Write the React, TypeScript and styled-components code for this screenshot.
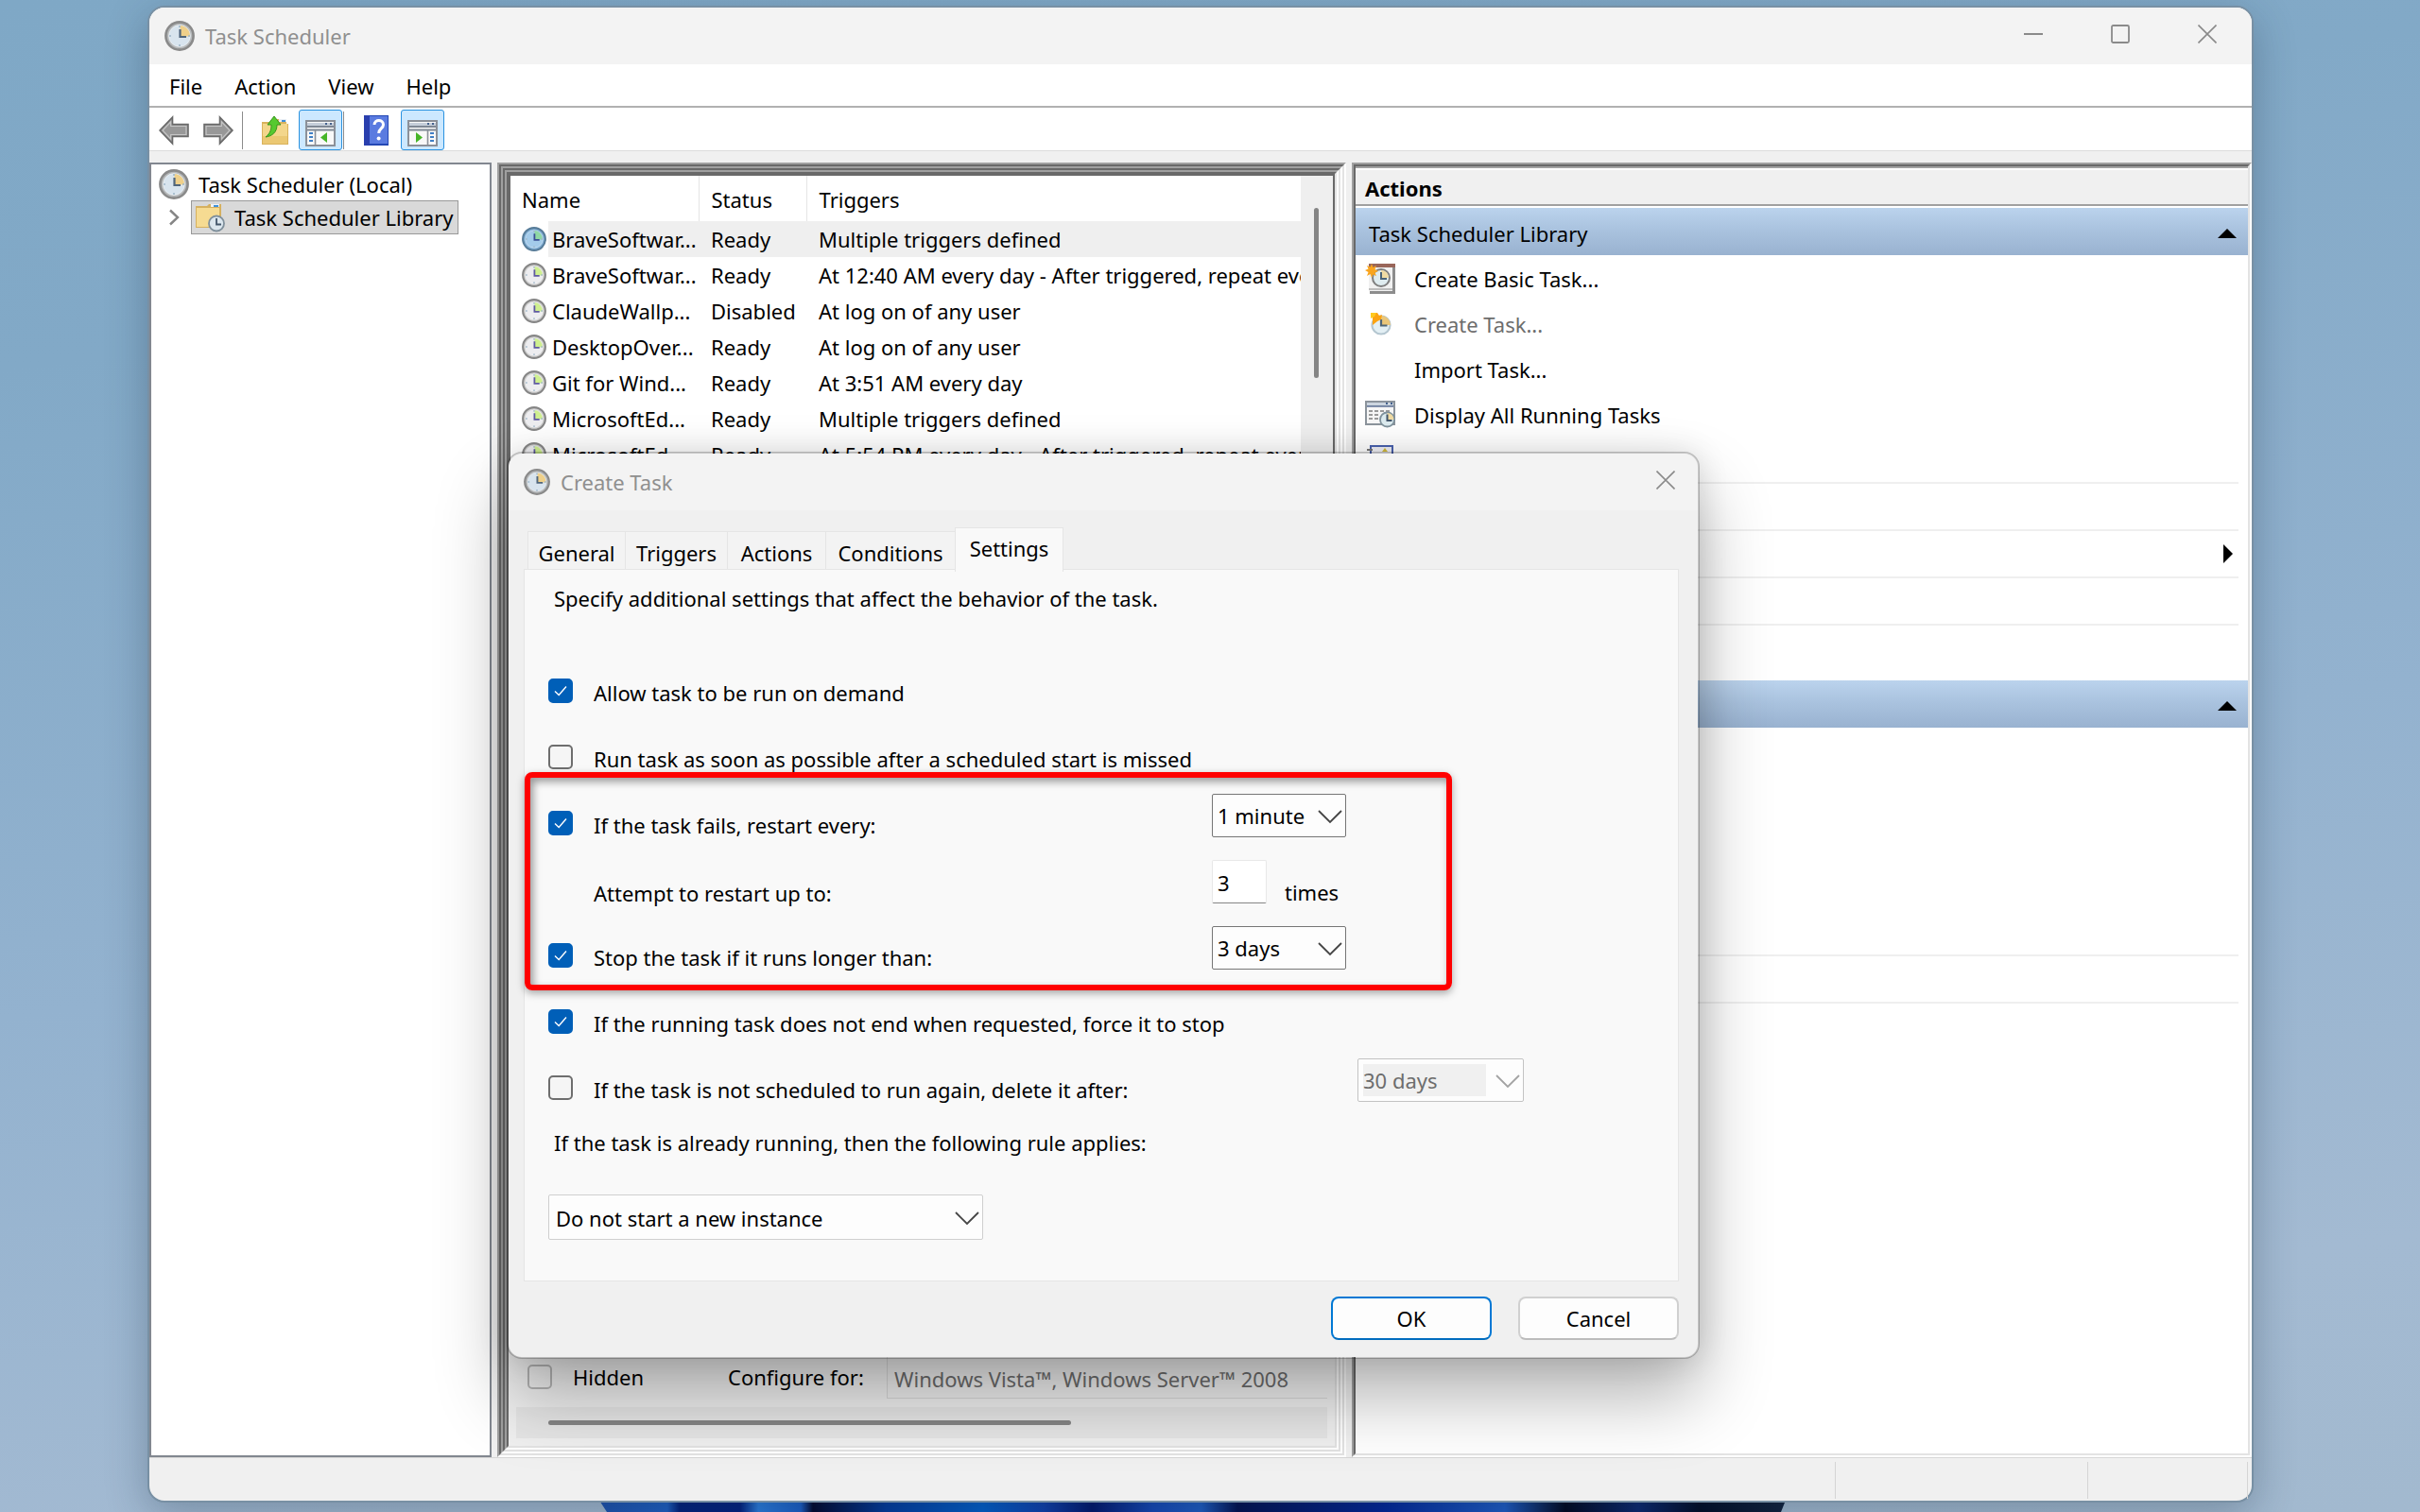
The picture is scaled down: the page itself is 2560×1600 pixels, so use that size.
import React from "react";
import styled, { createGlobalStyle, css } from "styled-components";

const GlobalStyle = createGlobalStyle`
  *, *::before, *::after { box-sizing: border-box; }
  html, body { margin: 0; height: 100%; }
  body, button, input, select, table {
    font-family: "Noto Sans", "Open Sans", sans-serif;
    font-size: 22px;
    line-height: 32px;
    color: #000;
  }
  body { overflow: hidden; }
  button { background: none; border: 0; padding: 0; text-align: left; }
  svg { display: block; flex: none; }
`;

/* ---------- Desktop and window frame ---------- */

const Desktop = styled.div`
  position: relative;
  display: flex;
  height: 100vh;
  padding: 6px 176px 10px 156px;
  background: linear-gradient(172deg, #7fa8c6 0%, #82a9c7 20%, #93b2cf 55%, #a3bad2 85%, #a2b9cf 100%);
`;

const Wallpaper = styled.svg`
  position: absolute;
  left: 0;
  bottom: 0;
  width: 100%;
  height: 40px;
`;

const Window = styled.main`
  position: relative;
  display: flex;
  flex-direction: column;
  flex: 1;
  min-width: 0;
  border: 2px solid #7890a4;
  border-radius: 18px;
  background: #f0f0f0;
  box-shadow: 0 12px 44px rgba(20, 40, 60, 0.3);
`;

const TitleBar = styled.header`
  display: flex;
  align-items: center;
  gap: 11px;
  height: 60px;
  flex: none;
  padding: 0 17px 0 16px;
  background: #f3f3f3;
  color: #8f8f8f;
  border-radius: 16px 16px 0 0;
`;

const TitleText = styled.h1`
  flex: 1;
  margin: 0;
  font-size: 22px;
  font-weight: 400;
`;

const Caption = styled.button<{ $narrow?: boolean }>`
  display: grid;
  place-items: center;
  width: ${(p) => (p.$narrow ? 34 : 60)}px;
  height: 48px;
  padding-bottom: 4px;
`;

const CaptionGroup = styled.div`
  display: flex;
  gap: 32px;
`;

const MenuBar = styled.nav`
  display: flex;
  align-items: center;
  gap: 34px;
  height: 46px;
  flex: none;
  padding: 1px 21px 0;
  background: #fff;
  border-bottom: 2px solid #b1b1b1;
`;

const ToolBar = styled.div`
  display: flex;
  align-items: center;
  height: 46px;
  flex: none;
  padding: 2px 10px 0;
  background: #fff;
  border-bottom: 1px solid #dcdcdc;
`;

const Tool = styled.button<{ $on?: boolean; $inset?: boolean; $w: number }>`
  display: grid;
  place-items: center;
  width: ${(p) => p.$w}px;
  height: 43px;
  padding-left: ${(p) => (p.$inset ? 7 : 0)}px;
  border-radius: 3px;
  ${(p) =>
    p.$on &&
    css`
      padding-top: 6px;
      background: #cce8ff;
      border: 1px solid #2a92e0;
    `}
`;

const ToolRule = styled.span`
  width: 1px;
  height: 40px;
  margin: 0 1px;
  background: #8c8c8c;
`;

const Body = styled.div`
  display: grid;
  grid-template-columns: 362px 898fr 952fr;
  gap: 6px;
  flex: 1;
  min-height: 0;
  padding: 12px 0 0;
`;

/* Sunken edge: one grey/dark line pair on the top and left, light pair on the bottom and right. */
const Sunken = styled.div`
  display: flex;
  flex-direction: column;
  flex: 1;
  min-width: 0;
  min-height: 0;
  border: 2px solid;
  border-color: #a0a0a0 #fff #fff #a0a0a0;
`;

const SunkenInner = styled(Sunken)`
  border-color: #696969 #e3e3e3 #e3e3e3 #696969;
`;

/* ---------- Tree ---------- */

const Tree = styled.aside`
  border: 2px solid #828790;
  background: #fff;
  padding: 3px 8px;
`;

const TreeRow = styled.div<{ $level?: number }>`
  display: flex;
  align-items: center;
  gap: ${(p) => (p.$level ? 12 : 10)}px;
  height: ${(p) => (p.$level ? 36 : 35)}px;
  padding-left: ${(p) => (p.$level ? 10 : 0)}px;
`;

const TreeItem = styled.button`
  display: flex;
  align-items: center;
  gap: 10px;
  height: 36px;
  padding: 0 4px 0 3px;
  white-space: nowrap;
  background: #d9d9d9;
  border: 1px solid #999;
`;

/* ---------- Task list ---------- */

const ListPane = styled.section`
  display: flex;
  height: 488px;
  flex: none;
  overflow: hidden;
  border: 2px solid #696969;
  background: #fff;
`;

const TableWrap = styled.div`
  flex: 1;
  min-width: 0;
  overflow: hidden;
`;

const TaskTable = styled.table`
  width: 100%;
  table-layout: fixed;
  border-collapse: collapse;
  white-space: nowrap;
  th {
    height: 48px;
    padding: 2px 12px 0 13px;
    font-weight: 400;
    text-align: left;
    line-height: 32px;
    border-right: 1px solid #e5e5e5;
  }
  th:first-child { padding-left: 12px; }
  th:last-child { border-right: 0; }
  td {
    height: 38px;
    padding: 0 0 0 13px;
    overflow: hidden;
  }
  td:first-child { padding-left: 12px; }
`;

const TaskRow = styled.tr<{ $selected: boolean }>`
  ${(p) =>
    p.$selected &&
    css`
      td { background: #efefef; }
      td:first-child { background: linear-gradient(to right, #fff 40px, #efefef 40px); }
    `}
`;

const NameCell = styled.div`
  display: flex;
  align-items: center;
  gap: 6px;
`;

const VScroll = styled.div`
  width: 34px;
  flex: none;
  padding: 34px 14px 0;
  background: #efefef;
`;

const VThumb = styled.div`
  width: 5px;
  height: 180px;
  border-radius: 3px;
  background: #858585;
`;

const DetailPane = styled.section`
  display: flex;
  flex: 1;
  flex-direction: column;
  justify-content: flex-end;
  min-height: 0;
  padding: 0 8px 8px;
  margin-top: 10px;
  background: #f0f0f0;
`;

const DetailRow = styled.div`
  display: flex;
  align-items: center;
  padding-left: 12px;
`;

const DetailLabel = styled.label<{ $w: number }>`
  width: ${(p) => p.$w}px;
  flex: none;
`;

const DetailSelect = styled.select`
  appearance: none;
  flex: 1;
  min-width: 0;
  height: 46px;
  padding: 4px 7px 0;
  color: #6d6d6d;
  opacity: 1;
  background: #f0f0f0;
  border: 1px solid #d8d8d8;
  border-right: 0;
`;

const HScroll = styled.div`
  height: 33px;
  margin-top: 9px;
  padding: 14px 34px;
  background: #e6e6e6;
`;

const HThumb = styled.div`
  width: 70%;
  height: 5px;
  border-radius: 3px;
  background: #858585;
`;

/* ---------- Actions pane ---------- */

const ActionsPane = styled.section`
  display: flex;
  flex-direction: column;
  min-width: 0;
  min-height: 0;
`;

const ActionsTitle = styled.h2`
  height: 42px;
  flex: none;
  margin: 0;
  padding: 5px 10px 0;
  font-size: 22px;
  font-weight: 700;
  line-height: 32px;
  background: #f0f0f0;
  border-top: 2px solid #a0a0a0;
  border-bottom: 2px solid #a0a0a0;
  box-shadow: inset 0 2px #fff;
`;

const ActionsScroll = styled.div`
  flex: 1;
  min-height: 0;
  overflow: hidden;
  padding-top: 2px;
  background: #fff;
`;

const GroupHead = styled.button`
  display: flex;
  align-items: center;
  justify-content: space-between;
  width: 100%;
  height: 50px;
  padding: 3px 12px 0 14px;
  background: linear-gradient(#bbd3ed, #aac3df 45%, #99b2d0);
`;

const ActionGroup = styled.div`
  padding: 0 10px 10px;
`;

const ActionItem = styled.button<{ $rule?: boolean }>`
  display: grid;
  grid-template-columns: 52px 1fr auto;
  align-items: center;
  width: 100%;
  height: ${(p) => (p.$rule ? 50 : 48)}px;
  padding: ${(p) => (p.$rule ? "0 6px 0 0" : "2px 6px 0 0")};
  border-top: ${(p) => (p.$rule ? "2px solid #efefef" : "0")};
  &:disabled { color: #6d6d6d; }
`;

const StatusBar = styled.footer`
  display: grid;
  grid-template-columns: 1fr 267px 169px;
  height: 46px;
  flex: none;
  padding: 4px 4px 2px 0;
  border-top: 1px solid #d7d7d7;
  border-radius: 0 0 16px 16px;
`;

const StatusCell = styled.div`
  border-right: 1px solid #d5d5d5;
`;

/* ---------- Dialog ---------- */

const Dialog = styled.section`
  position: absolute;
  left: 378px;
  top: 470px;
  width: 1262px;
  border: 2px solid rgba(0, 0, 0, 0.22);
  border-radius: 16px;
  background: #f0f0f0;
  background-clip: padding-box;
  box-shadow: 0 40px 76px rgba(0, 0, 0, 0.3), 0 0 32px rgba(0, 0, 0, 0.12);
`;

const DialogBody = styled.form`
  padding: 18px 20px 18px 16px;
`;

const TabStrip = styled.div`
  position: relative;
  display: flex;
  align-items: flex-end;
  height: 44px;
  padding-left: 4px;
`;

const Tab = styled.button<{ $active?: boolean; $w: number }>`
  width: ${(p) => p.$w}px;
  height: 40px;
  padding-top: 4px;
  text-align: center;
  background: #f3f3f3;
  border: 1px solid #e5e5e5;
  border-width: 1px 0 0 1px;
  ${(p) =>
    p.$active &&
    css`
      height: 47px;
      margin-bottom: -3px;
      padding: 0 0 4px;
      border-right-width: 1px;
      background: #f9f9f9;
      z-index: 1;
    `}
`;

const Panel = styled.div`
  padding: 14px 25px 43px;
  background: #f9f9f9;
  border: 1px solid #e5e5e5;
`;

const Note = styled.p`
  margin: 0;
  padding-left: 6px;
`;

const Options = styled.div`
  margin: 47px 0 7px;
`;

const OptionRow = styled.div<{ $wide?: boolean }>`
  display: grid;
  grid-template-columns: 48px ${(p) => (p.$wide ? 808 : 654)}px auto;
  align-items: center;
  height: 70px;
`;

const OptionLabel = styled.label<{ $low?: boolean }>`
  grid-column: 2;
  padding-top: ${(p) => (p.$low ? 8 : 4)}px;
  white-space: nowrap;
`;

const OptionControl = styled.div`
  display: flex;
  align-items: flex-end;
  gap: 19px;
  padding-bottom: 16px;
`;

const Unit = styled.span`
  line-height: 32px;
  margin-bottom: -4px;
`;

const Group = styled.div`
  position: relative;
`;

/* Red callout drawn over the restart settings. */
const Callout = styled.div`
  position: absolute;
  left: -25px;
  top: -19px;
  bottom: -2px;
  width: 981px;
  border: 6px solid #f00;
  border-radius: 8px;
  pointer-events: none;
  box-shadow: 0 3px 8px rgba(0, 0, 0, 0.35), inset 3px 4px 8px rgba(0, 0, 0, 0.4);
`;

const RuleLine = styled.div`
  margin-top: 39px;
`;

const CheckWrap = styled.span`
  position: relative;
  display: block;
  width: 26px;
  height: 26px;
  flex: none;
  svg { position: absolute; left: 6px; top: 7px; pointer-events: none; }
`;

const CheckInput = styled.input`
  appearance: none;
  display: block;
  width: 26px;
  height: 26px;
  margin: 0;
  border: 2px solid #6e6e6e;
  border-radius: 5px;
  background: #f5f5f5;
  &:checked { background: #005fb8; border-color: #005fb8; }
  &:disabled { border-color: #b5b5b5; background: transparent; }
`;

const HiddenCheck = styled.span`
  width: 48px;
  flex: none;
`;

const SelectWrap = styled.span<{ $w: number }>`
  position: relative;
  display: block;
  width: ${(p) => p.$w}px;
  svg { position: absolute; right: 4px; top: 50%; margin-top: -6px; pointer-events: none; }
`;

const SelectBox = styled.select<{ $tall?: boolean }>`
  appearance: none;
  display: block;
  width: 100%;
  height: ${(p) => (p.$tall ? 48 : 46)}px;
  padding: ${(p) => (p.$tall ? "2px 7px 0" : "0 5px")};
  border: 1px solid ${(p) => (p.$tall ? "#cfcfcf" : "#767676")};
  border-radius: 2px;
  background: #fdfdfd;
  &:disabled {
    color: #6d6d6d;
    opacity: 1;
    border-color: #c3c3c3;
    background: linear-gradient(#f0f0f0, #f0f0f0) 5px 5px / 130px 34px no-repeat #fdfdfd;
  }
`;

const NumberBox = styled.input`
  width: 58px;
  height: 46px;
  padding: 2px 5px 0;
  border: 1px solid #e8e8e8;
  border-bottom-color: #868686;
  border-radius: 2px;
  background: #fff;
`;

const Buttons = styled.div`
  display: flex;
  justify-content: flex-end;
  gap: 28px;
  margin-top: 16px;
`;

const PushButton = styled.button<{ $primary?: boolean }>`
  width: 170px;
  height: 46px;
  text-align: center;
  background: #fdfdfd;
  border: 2px solid ${(p) => (p.$primary ? "#0078d4" : "#d0d0d0")};
  border-bottom-color: ${(p) => (p.$primary ? "#006cbe" : "#bcbcbc")};
  border-radius: 8px;
`;

/* ---------- Drawings ---------- */

const Clock = ({ size = 32, tone = "plain" }: { size?: number; tone?: "plain" | "list" | "selected" }) => {
  const palette = {
    plain: { ring: "#8a8a8a", rim: "#b6b9bb", face: "#d8e4ee", slice: "#efd08a", hand: "#50667c" },
    list: { ring: "#868686", rim: "#cfcfcf", face: "#ededf0", slice: "#cff08f", hand: "#5f5aa0" },
    selected: { ring: "#577c99", rim: "#82b0d6", face: "#a3cbea", slice: "#8fd8a4", hand: "#3a4f94" },
  }[tone];
  return (
    <svg width={size} height={size} viewBox="0 0 32 32" aria-hidden="true">
      <circle cx="16" cy="16" r="14.6" fill={palette.rim} stroke={palette.ring} strokeWidth="2.6" />
      <circle cx="16" cy="16" r="11.4" fill={palette.face} stroke="#fff" strokeOpacity="0.5" />
      <path d="M16.500 16.500V5A11 11 0 0 1 27 16.500Z" fill={palette.slice} />
      <path d="M16 5v2M16 25v2M5 16h2M25 16h2" stroke="#9fb7c9" strokeWidth="1.6" />
      <path d="M16.500 9v8H23" fill="none" stroke={palette.hand} strokeWidth="2.2" />
    </svg>
  );
};

const BackArrow = ({ flip }: { flip?: boolean }) => (
  <svg width="32" height="32" viewBox="0 0 32 32" aria-hidden="true">
    <g transform={flip ? "matrix(-1 0 0 1 32 0)" : undefined}>
      <path d="M1 16 14.5 2v7.5H31v13H14.5V30Z" fill="#8d8d8d" stroke="#6a6a6a" strokeWidth="1.6" />
      <path d="M4 16 12.7 6.800v4.700H29v9H12.700v4.700Z" fill="#989898" stroke="#c6c6c6" strokeWidth="1.2" />
    </g>
  </svg>
);

const FolderUp = () => (
  <svg width="30" height="32" viewBox="0 0 30 32" aria-hidden="true">
    <path d="M1 7h9l2-3h15v5h2v22H1Z" fill="#d9b25c" />
    <path d="M19 4h8v3h-8Z" fill="#e9eef5" />
    <path d="M22 5h4v2h-4Z" fill="#3f8fd8" />
    <path d="M2 9h26v21H2Z" fill="#f3d68b" />
    <path d="M2 22h26v8H2Z" fill="#ebc873" />
    <path d="M5 23c5-4 6-8 6-13H7L14 1l7 9h-4c0 8-5 12-12 13Z" fill="#56c92f" stroke="#38951c" />
  </svg>
);

const PaneIcon = ({ side }: { side: "left" | "right" }) => (
  <svg width="32" height="28" viewBox="0 0 32 28" aria-hidden="true">
    <rect x="1" y="1" width="30" height="26" fill="#f8f8f8" stroke="#8b9098" strokeWidth="2" />
    <path d="M2 3h28v3H2Z" fill="#c5ced9" />
    <path d="M2 6h28v2H2ZM2 9.500h28v2H2Z" fill="#7e8894" />
    <path d="M21 3h2v2h-2ZM26 3h2v2h-2Z" fill="#44618d" />
    <g transform={side === "right" ? "matrix(-1 0 0 1 32 0)" : undefined}>
      <path d="M10.500 11v15" stroke="#8b9098" strokeWidth="1.6" />
      <path d="M4 14h4M4 18h4M4 22h4" stroke="#3f7fc5" strokeWidth="2" />
      <path d="M23 13v11l-7-5.500Z" fill="#46b528" />
    </g>
  </svg>
);

const HelpBook = () => (
  <svg width="26" height="32" viewBox="0 0 26 32" aria-hidden="true">
    <rect width="26" height="32" fill="#2347b4" />
    <rect x="6" y="1" width="19" height="29" fill="#5a7be0" />
    <path d="M0 0h6v32H0Z" fill="#2a3fae" />
    <path d="M11 10c0-6 9.500-6 9.500 0 0 4-4.800 4-4.800 9" fill="none" stroke="#fff" strokeWidth="3" />
    <circle cx="15.600" cy="24.500" r="2" fill="#fff" />
  </svg>
);

const FolderClock = () => (
  <svg width="32" height="32" viewBox="0 0 32 32" aria-hidden="true">
    <path d="M1 4h12l2-2h13v25H1Z" fill="#d6b160" />
    <path d="M17 2h9v3h-9Z" fill="#eef2f7" />
    <path d="M20 3h5v2h-5Z" fill="#3e91dc" />
    <path d="M2 6h24v20H2Z" fill="#f6db92" />
    <circle cx="23" cy="22.500" r="8" fill="#dbe6ee" stroke="#7f8f9b" strokeWidth="1.800" />
    <path d="M23 17v6.500h5" fill="none" stroke="#43566a" strokeWidth="1.800" />
  </svg>
);

const NewTaskIcon = () => (
  <svg width="32" height="32" viewBox="0 0 32 32" aria-hidden="true">
    <path d="M5 0h27v32H5Z" fill="#8d8d8d" />
    <path d="M4 4h25v25H4Z" fill="#f1f1f1" />
    <path d="M4 0h28v4H4Z" fill="#99665a" />
    <path d="M4 26h25v2H4Z" fill="#bdbdbd" />
    <circle cx="17" cy="15" r="9" fill="#dfecf0" stroke="#7f7f7f" strokeWidth="2" />
    <path d="M17 15V7a8 8 0 0 1 8 8Z" fill="#f0dba3" />
    <path d="M17 9v7h6" fill="none" stroke="#4b6478" strokeWidth="2" />
    <path d="m7 0 1.500 4L12 2l-1.500 4L14 8l-3.500 1.500L12 13l-3.800-1.500L7 15l-1.500-4L2 13l1.500-4L0 7l3.500-1.500L2 2l3.700 1.500Z" fill="#f9a51f" />
  </svg>
);

const CreateTaskIcon = () => (
  <svg width="32" height="32" viewBox="0 0 32 32" aria-hidden="true">
    <circle cx="17" cy="17" r="9.600" fill="#e3eff4" stroke="#b4c6d0" strokeWidth="2" />
    <path d="M17 17V7a10 10 0 0 1 10 10Z" fill="#eac679" />
    <path d="M17 11v6.500h6.500" fill="none" stroke="#4f6678" strokeWidth="2.200" />
    <path d="M6 4h7l2 3 3-1-1 5-4 2-5 4V9Z" fill="#fca311" />
    <path d="M6 4h6l-2 4-4 2Z" fill="#ffc91f" />
  </svg>
);

const RunningIcon = () => (
  <svg width="32" height="32" viewBox="0 0 32 32" aria-hidden="true">
    <rect x="1" y="2" width="30" height="24" fill="#f6f6f6" stroke="#8c949c" strokeWidth="2" />
    <path d="M2 3h28v3H2Z" fill="#ccd5df" />
    <path d="M2 6h28v1.800H2Z" fill="#6e7f9f" />
    <path d="M22 3h2v2h-2ZM27 3h2v2h-2Z" fill="#44618d" />
    <path d="M4 12h4m2 0h4m2 0h4m2 0h4M4 16h4m2 0h4M4 20h4m2 0h4" stroke="#9a9a9a" strokeWidth="1.800" />
    <circle cx="23.500" cy="21" r="7.500" fill="#dcebef" stroke="#7f929c" strokeWidth="1.800" />
    <path d="M23.500 21v-7a7 7 0 0 1 7 7Z" fill="#f0dba3" />
    <path d="M23.500 15.500V22h5" fill="none" stroke="#43566a" strokeWidth="2" />
  </svg>
);

const HistoryIcon = () => (
  <svg width="32" height="32" viewBox="0 0 32 32" aria-hidden="true">
    <rect x="6" y="1" width="23" height="30" fill="#f0f0f6" stroke="#4a61ae" strokeWidth="2" />
    <path d="M2 5h6M2 11h6M2 17h6" stroke="#777" strokeWidth="2" />
    <path d="m21 3 3 4h-6Z" fill="#d0b83a" />
  </svg>
);

const UpTriangle = () => (
  <svg width="20" height="10" viewBox="0 0 20 10" aria-hidden="true">
    <path d="M10 0 20 10H0Z" />
  </svg>
);

const RightTriangle = () => (
  <svg width="10" height="20" viewBox="0 0 10 20" aria-hidden="true">
    <path d="M0 0 10 10 0 20Z" />
  </svg>
);

const CloseMark = () => (
  <svg width="20" height="20" viewBox="0 0 20 20" aria-hidden="true">
    <path d="m.500.500 19 19m0-19-19 19" stroke="#8a8a8a" strokeWidth="1.600" />
  </svg>
);

const Chevron = ({ faded }: { faded?: boolean }) => (
  <svg width="26" height="15" viewBox="0 0 26 15" aria-hidden="true">
    <path d="m1 1 12 12L25 1" fill="none" stroke={faded ? "#a3a3a3" : "#454545"} strokeWidth="1.800" />
  </svg>
);

/* ---------- Small parts ---------- */

const Check = ({ id, on, disabled }: { id: string; on?: boolean; disabled?: boolean }) => (
  <CheckWrap>
    <CheckInput type="checkbox" id={id} defaultChecked={on} disabled={disabled} />
    {on && (
      <svg width="14" height="12" viewBox="0 0 14 12" aria-hidden="true">
        <path d="m1 6.500 4.200 4L13 1.500" fill="none" stroke="#fff" strokeWidth="1.400" />
      </svg>
    )}
  </CheckWrap>
);

const DropDown = (p: { label: string; value: string; width: number; tall?: boolean; disabled?: boolean }) => (
  <SelectWrap $w={p.width}>
    <SelectBox aria-label={p.label} $tall={p.tall} disabled={p.disabled} defaultValue={p.value}>
      <option>{p.value}</option>
    </SelectBox>
    <Chevron faded={p.disabled} />
  </SelectWrap>
);

const tasks = [
  ["BraveSoftwar...", "Ready", "Multiple triggers defined"],
  ["BraveSoftwar...", "Ready", "At 12:40 AM every day - After triggered, repeat every"],
  ["ClaudeWallp...", "Disabled", "At log on of any user"],
  ["DesktopOver...", "Ready", "At log on of any user"],
  ["Git for Wind...", "Ready", "At 3:51 AM every day"],
  ["MicrosoftEd...", "Ready", "Multiple triggers defined"],
  ["MicrosoftEd...", "Ready", "At 5:54 PM every day - After triggered, repeat every"],
];

const actions = [
  { label: "Create Basic Task...", icon: <NewTaskIcon /> },
  { label: "Create Task...", icon: <CreateTaskIcon />, disabled: true },
  { label: "Import Task..." },
  { label: "Display All Running Tasks", icon: <RunningIcon /> },
  { label: "Enable All Tasks History", icon: <HistoryIcon /> },
];

const CreateTaskDialog = () => (
  <Dialog role="dialog" aria-labelledby="dialog-title">
    <TitleBar as="div">
      <Clock size={28} />
      <TitleText as="h2" id="dialog-title">Create Task</TitleText>
      <Caption $narrow aria-label="Close dialog"><CloseMark /></Caption>
    </TitleBar>
    <DialogBody onSubmit={(e) => e.preventDefault()}>
      <TabStrip role="tablist">
        <Tab type="button" role="tab" $w={103}>General</Tab>
        <Tab type="button" role="tab" $w={108}>Triggers</Tab>
        <Tab type="button" role="tab" $w={104}>Actions</Tab>
        <Tab type="button" role="tab" $w={137}>Conditions</Tab>
        <Tab type="button" role="tab" $w={115} $active aria-selected="true">Settings</Tab>
      </TabStrip>
      <Panel role="tabpanel">
        <Note>Specify additional settings that affect the behavior of the task.</Note>
        <Options>
          <OptionRow>
            <Check id="demand" on />
            <OptionLabel htmlFor="demand">Allow task to be run on demand</OptionLabel>
          </OptionRow>
          <OptionRow>
            <Check id="missed" />
            <OptionLabel htmlFor="missed">Run task as soon as possible after a scheduled start is missed</OptionLabel>
          </OptionRow>
          <Group>
            <OptionRow>
              <Check id="restart" on />
              <OptionLabel htmlFor="restart">If the task fails, restart every:</OptionLabel>
              <OptionControl>
                <DropDown label="Restart interval" value="1 minute" width={142} />
              </OptionControl>
            </OptionRow>
            <OptionRow>
              <OptionLabel htmlFor="attempts" $low>Attempt to restart up to:</OptionLabel>
              <OptionControl>
                <NumberBox id="attempts" defaultValue="3" />
                <Unit>times</Unit>
              </OptionControl>
            </OptionRow>
            <OptionRow>
              <Check id="stop" on />
              <OptionLabel htmlFor="stop">Stop the task if it runs longer than:</OptionLabel>
              <OptionControl>
                <DropDown label="Longest run" value="3 days" width={142} />
              </OptionControl>
            </OptionRow>
            <Callout />
          </Group>
          <OptionRow>
            <Check id="force" on />
            <OptionLabel htmlFor="force">If the running task does not end when requested, force it to stop</OptionLabel>
          </OptionRow>
          <OptionRow $wide>
            <Check id="delete" />
            <OptionLabel htmlFor="delete">If the task is not scheduled to run again, delete it after:</OptionLabel>
            <OptionControl>
              <DropDown label="Delete after" value="30 days" width={176} disabled />
            </OptionControl>
          </OptionRow>
        </Options>
        <Note>If the task is already running, then the following rule applies:</Note>
        <RuleLine>
          <DropDown label="Running instance rule" value="Do not start a new instance" width={460} tall />
        </RuleLine>
      </Panel>
      <Buttons>
        <PushButton type="submit" $primary>OK</PushButton>
        <PushButton type="button">Cancel</PushButton>
      </Buttons>
    </DialogBody>
  </Dialog>
);

export default function App() {
  return (
    <>
      <GlobalStyle />
      <Desktop>
        <Wallpaper viewBox="0 0 2560 40" preserveAspectRatio="none" aria-hidden="true">
          <defs>
            <linearGradient id="bloom" x1="0" x2="1">
              <stop offset="0" stopColor="#1c4ea8" />
              <stop offset="0.07" stopColor="#1d5fc4" />
              <stop offset="0.08" stopColor="#00207c" />
              <stop offset="0.13" stopColor="#001f80" />
              <stop offset="0.145" stopColor="#2a7de0" />
              <stop offset="0.18" stopColor="#1a5ec8" />
              <stop offset="0.19" stopColor="#00062c" />
              <stop offset="0.25" stopColor="#003a9e" />
              <stop offset="0.33" stopColor="#005fcc" />
              <stop offset="0.38" stopColor="#0e3fae" />
              <stop offset="0.42" stopColor="#00156c" />
              <stop offset="0.47" stopColor="#1447b8" />
              <stop offset="0.51" stopColor="#1d5cc4" />
              <stop offset="0.54" stopColor="#000f50" />
              <stop offset="0.66" stopColor="#00259a" />
              <stop offset="0.76" stopColor="#1d5cc8" />
              <stop offset="0.81" stopColor="#00061e" />
              <stop offset="0.87" stopColor="#0a2670" />
              <stop offset="0.92" stopColor="#000a24" />
              <stop offset="1" stopColor="#12233f" />
            </linearGradient>
          </defs>
          <path d="M616 0H1900L1884 40H642Z" fill="url(#bloom)" />
        </Wallpaper>
        <Window>
          <TitleBar>
            <Clock />
            <TitleText>Task Scheduler</TitleText>
            <CaptionGroup>
              <Caption aria-label="Minimize">
                <svg width="20" height="20" viewBox="0 0 20 20" aria-hidden="true"><path d="M0 10h20" stroke="#8a8a8a" strokeWidth="2" /></svg>
              </Caption>
              <Caption aria-label="Maximize">
                <svg width="20" height="20" viewBox="0 0 20 20" aria-hidden="true"><rect x="1" y="1" width="18" height="18" rx="1.500" fill="none" stroke="#8a8a8a" strokeWidth="1.800" /></svg>
              </Caption>
              <Caption aria-label="Close"><CloseMark /></Caption>
            </CaptionGroup>
          </TitleBar>
          <MenuBar>
            <button>File</button>
            <button>Action</button>
            <button>View</button>
            <button>Help</button>
          </MenuBar>
          <ToolBar>
            <Tool $w={32} aria-label="Back"><BackArrow /></Tool>
            <Tool $w={55} $inset aria-label="Forward"><BackArrow flip /></Tool>
            <ToolRule />
            <Tool $w={58} $inset aria-label="Up one level"><FolderUp /></Tool>
            <Tool $w={46} $on aria-label="Console tree"><PaneIcon side="left" /></Tool>
            <ToolRule />
            <Tool $w={59} $inset aria-label="Help"><HelpBook /></Tool>
            <Tool $w={46} $on aria-label="Action pane"><PaneIcon side="right" /></Tool>
          </ToolBar>
          <Body>
            <Tree>
              <TreeRow>
                <Clock />
                <span>Task Scheduler (Local)</span>
              </TreeRow>
              <TreeRow $level={1}>
                <svg width="12" height="18" viewBox="0 0 12 18" aria-hidden="true"><path d="m2 1.500 8 7.500-8 7.500" fill="none" stroke="#858585" strokeWidth="2.400" /></svg>
                <TreeItem><FolderClock />Task Scheduler Library</TreeItem>
              </TreeRow>
            </Tree>
            <Sunken><SunkenInner><Sunken><SunkenInner><Sunken><SunkenInner>
              <ListPane>
                <TableWrap>
                  <TaskTable>
                    <colgroup>
                      <col width="199" />
                      <col width="114" />
                      <col />
                    </colgroup>
                    <thead>
                      <tr><th>Name</th><th>Status</th><th>Triggers</th></tr>
                    </thead>
                    <tbody>
                      {tasks.map(([name, status, trigger], i) => (
                        <TaskRow key={i} $selected={i === 0}>
                          <td><NameCell><Clock size={26} tone={i === 0 ? "selected" : "list"} />{name}</NameCell></td>
                          <td>{status}</td>
                          <td>{trigger}</td>
                        </TaskRow>
                      ))}
                    </tbody>
                  </TaskTable>
                </TableWrap>
                <VScroll><VThumb /></VScroll>
              </ListPane>
              <DetailPane>
                <DetailRow>
                  <HiddenCheck><Check id="hidden" disabled /></HiddenCheck>
                  <DetailLabel $w={164} htmlFor="hidden">Hidden</DetailLabel>
                  <DetailLabel $w={168} htmlFor="configure">Configure for:</DetailLabel>
                  <DetailSelect id="configure" disabled>
                    <option>Windows Vista™, Windows Server™ 2008</option>
                  </DetailSelect>
                </DetailRow>
                <HScroll><HThumb /></HScroll>
              </DetailPane>
            </SunkenInner></Sunken></SunkenInner></Sunken></SunkenInner></Sunken>
            <ActionsPane>
              <Sunken><SunkenInner>
                <ActionsTitle>Actions</ActionsTitle>
                <ActionsScroll>
                  <GroupHead>Task Scheduler Library<UpTriangle /></GroupHead>
                  <ActionGroup>
                    {actions.map((a) => (
                      <ActionItem key={a.label} disabled={a.disabled}>
                        <span>{a.icon}</span>
                        <span>{a.label}</span>
                      </ActionItem>
                    ))}
                    <ActionItem $rule aria-label="New Folder" />
                    <ActionItem $rule aria-label="View"><span /><span /><RightTriangle /></ActionItem>
                    <ActionItem $rule aria-label="Refresh" />
                    <ActionItem $rule aria-label="Help" />
                  </ActionGroup>
                  <GroupHead aria-label="Selected Item"><span /><UpTriangle /></GroupHead>
                  <ActionGroup>
                    <ActionItem aria-label="Run" />
                    <ActionItem aria-label="End" />
                    <ActionItem aria-label="Disable" />
                    <ActionItem aria-label="Export" />
                    <ActionItem aria-label="Properties" />
                    <ActionItem $rule aria-label="Delete" />
                    <ActionItem $rule aria-label="Item help" />
                  </ActionGroup>
                </ActionsScroll>
              </SunkenInner></Sunken>
            </ActionsPane>
          </Body>
          <StatusBar><StatusCell /><StatusCell /><StatusCell /></StatusBar>
          <CreateTaskDialog />
        </Window>
      </Desktop>
    </>
  );
}
